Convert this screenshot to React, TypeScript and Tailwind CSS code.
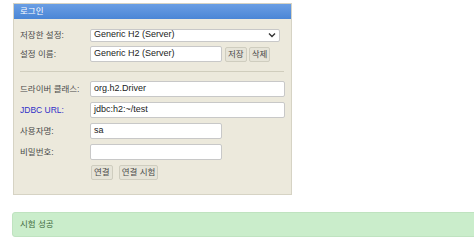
import React from "react";

const font = { fontFamily: '"Liberation Sans", "Noto Sans CJK KR", sans-serif' };

const Label = ({ children, blue = false }: { children: React.ReactNode; blue?: boolean }) => (
  <div className={`w-[70px] shrink-0 text-[8.5px] ${blue ? "text-[#3030c8]" : "text-[#4a4a4a]"}`}>{children}</div>
);

const SmallButton = ({ children }: { children: React.ReactNode }) => (
  <button className="h-[15px] px-[2px] border border-[#cfcdbf] rounded-[2px] bg-[#e6e4d8] text-[8.5px] text-[#4a4a4a] leading-none">
    {children}
  </button>
);

const Input = ({ value, w }: { value: string; w: string }) => (
  <div className={`${w} h-[16px] bg-white border border-[#c8c8c8] rounded-[2px] px-[3px] flex items-center text-[9px] text-[#222]`}>
    {value}
  </div>
);

export default function App() {
  return (
    <div className="w-[474px] h-[244px] bg-white relative overflow-hidden" style={font}>
      <div className="ml-[13px] mt-[3px] w-[279px] border border-[#d6d3c4] bg-[#ece9dc]">
        <div className="h-[15px] bg-gradient-to-b from-[#6a9ee4] to-[#4a86d6] text-white text-[8.5px] pl-[6px] flex items-center">
          로그인
        </div>
        <div className="pl-[6px] pr-[6px] pt-[8px] pb-[14px] flex flex-col">
          <div className="flex items-center h-[16px]">
            <Label>저장한 설정:</Label>
            <div className="w-[190px] h-[13px] bg-white border border-[#c8c8c8] rounded-[2px] px-[3px] flex items-center justify-between text-[9px] text-[#222]">
              <span>Generic H2 (Server)</span>
              <svg width="8" height="6" viewBox="0 0 8 6">
                <path d="M1 1.5 L4 4.5 L7 1.5" stroke="#333" strokeWidth="1.4" fill="none" />
              </svg>
            </div>
          </div>
          <div className="flex items-center mt-[2px] h-[18px]">
            <Label>설정 이름:</Label>
            <Input value="Generic H2 (Server)" w="w-[132px]" />
            <div className="ml-[3px] flex gap-[2px]">
              <SmallButton>저장</SmallButton>
              <SmallButton>삭제</SmallButton>
            </div>
          </div>
          <div className="mt-[8px] mb-[9px] h-px bg-[#d0cdbd] mr-[1px]" />
          <div className="flex flex-col gap-[5px]">
            <div className="flex items-center">
              <Label>드라이버 클래스:</Label>
              <Input value="org.h2.Driver" w="w-[195px]" />
            </div>
            <div className="flex items-center">
              <Label blue>JDBC URL:</Label>
              <Input value="jdbc:h2:~/test" w="w-[195px]" />
            </div>
            <div className="flex items-center">
              <Label>사용자명:</Label>
              <Input value="sa" w="w-[132px]" />
            </div>
            <div className="flex items-center">
              <Label>비밀번호:</Label>
              <Input value="" w="w-[132px]" />
            </div>
            <div className="flex items-center">
              <div className="w-[71px] shrink-0" />
              <div className="flex gap-[6px]">
                <SmallButton>연결</SmallButton>
                <SmallButton>연결 시험</SmallButton>
              </div>
            </div>
          </div>
        </div>
      </div>
      <div className="ml-[12px] mt-[17px] w-[470px] h-[25px] bg-[#caedcb] border border-[#bfe3c0] rounded-[3px] pl-[7px] flex items-center text-[8.5px] text-[#3f6b40]">
        시험 성공
      </div>
    </div>
  );
}
